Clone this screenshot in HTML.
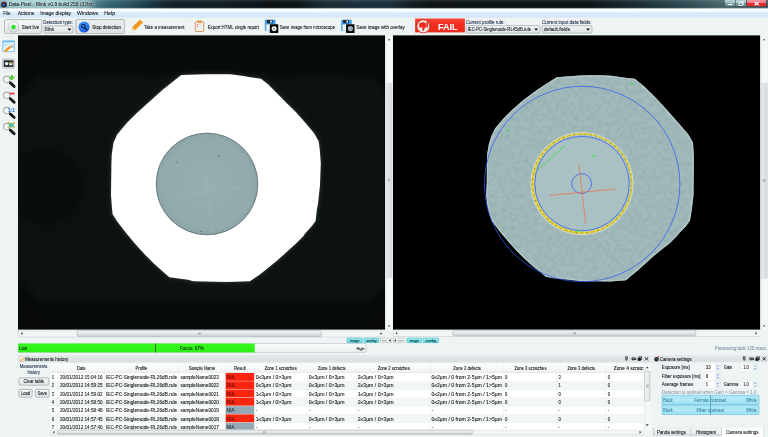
<!DOCTYPE html>
<html lang="en"><head><meta charset="utf-8"><title>Data-Pixel - Blink v0.9 build 258 (32bit)</title>
<style>
html,body{margin:0;padding:0;background:#eef3f3;overflow:hidden}
#w{position:relative;width:768px;height:437px;overflow:hidden}
#r{position:absolute;left:0;top:0;width:6144px;height:3496px;overflow:hidden;background:#eef3f3;font-family:"Liberation Sans",sans-serif;transform:scale(0.125);transform-origin:0 0}
#r div,#r span,#r svg{position:absolute}
#r svg{overflow:visible}
#r .t{white-space:nowrap;display:block}
</style></head><body><div id="w"><div id="r">
<div style="left:0;top:0;width:6144px;height:68.8px;background:linear-gradient(90deg,#86b2b8 0px,#a9d4d8 112px,#a6d0d5 480px,#86b0b7 704px,#4a7e8a 776px,#386874 880px,#2b5462 1040px,#1c3a46 1200px,#122028 1376px,#142028 1696px,#0c1216 2160px,#0e161a 2400px,#1c303a 2600px,#1e3440 3120px,#131d22 3296px,#0d1316 3456px,#0e161a 4720px,#1e3038 5120px,#2e4a52 5440px,#4a6a70 5776px,#42626a 6144px);"></div>
<div style="left:0;top:0;width:6144px;height:68.8px;background:linear-gradient(180deg,rgba(255,255,255,.10),rgba(255,255,255,0) 35%,rgba(0,0,0,.10) 75%,rgba(120,170,185,.22) 100%);"></div>
<svg style="left:6.4px;top:9.6px" width="51.2" height="51.2" viewBox="0 0 64 64"><circle cx="32" cy="34" r="28" fill="#1b1f2a"/><circle cx="30" cy="36" r="13" fill="#2a55e0"/><circle cx="27" cy="33" r="5" fill="#7fb0ff"/><circle cx="34" cy="9" r="9" fill="#e02020"/></svg>
<span class="t" style="left:68.8px;top:12.64px;font-size:37.6px;line-height:45.12px;color:#10171a;transform:scaleX(1.051);transform-origin:0 0;-webkit-text-stroke:0.72px #10171a;text-shadow:0 0 6.4px #e8ffff,0 0 14.4px #d0f4f4,0 0 22.4px #c8f0f0;">Data-Pixel - Blink v0.9 build 258 (32bit)</span>
<div style="left:5796px;top:0;width:89.6px;height:55.2px;background:linear-gradient(180deg,#b6d0d3 0%,#a9c5c9 48%,#6f8f96 52%,#7b9aa0 100%);border:4px solid #2c4248;border-top:0;border-radius:0 0 0 12.8px;box-sizing:border-box"></div>
<div style="left:5885.6px;top:0;width:87.2px;height:55.2px;background:linear-gradient(180deg,#b6d0d3 0%,#a9c5c9 48%,#6f8f96 52%,#7b9aa0 100%);border:4px solid #2c4248;border-top:0;border-left:0;box-sizing:border-box"></div>
<div style="left:5972.8px;top:0;width:160px;height:55.2px;background:linear-gradient(180deg,#f096a8 0%,#ec7f90 46%,#e31c1c 52%,#e83434 100%);border:4px solid #4a1a1a;border-top:0;border-left:0;border-radius:0 0 12.8px 0;box-sizing:border-box"></div>
<div style="left:5822.4px;top:32px;width:36.8px;height:9.6px;background:#f4f8f8;box-shadow:0 0 4px #345"></div>
<svg style="left:5907.2px;top:11.2px" width="44.8" height="36.8" viewBox="0 0 12 10"><rect x="3.5" y="1" width="7" height="6" fill="none" stroke="#f4f8f8" stroke-width="1.8"/><rect x="1" y="3.5" width="7" height="5.5" fill="#5e7e86" stroke="#f4f8f8" stroke-width="1.8"/></svg>
<svg style="left:6032px;top:12px" width="43.2" height="35.2" viewBox="0 0 12 9"><path d="M1.5 1L10.5 8M10.5 1L1.5 8" stroke="#fff" stroke-width="2.8"/></svg>
<div style="left:0px;top:68px;width:6144px;height:73.6px;background:linear-gradient(180deg,#eef4f8 0%,#ffffff 8%,#fafdff 28%,#ddecfa 42%,#d3e7f9 100%);"></div>
<span class="t" style="left:25.6px;top:80.96px;font-size:38.4px;line-height:46.08px;color:#1a1c24;transform:scaleX(0.931);transform-origin:0 0;-webkit-text-stroke:0.72px #1a1c24;">File</span>
<span class="t" style="left:140.8px;top:80.96px;font-size:38.4px;line-height:46.08px;color:#1a1c24;transform:scaleX(1.055);transform-origin:0 0;-webkit-text-stroke:0.72px #1a1c24;">Actions</span>
<span class="t" style="left:321.6px;top:80.96px;font-size:38.4px;line-height:46.08px;color:#1a1c24;transform:scaleX(1.04);transform-origin:0 0;-webkit-text-stroke:0.72px #1a1c24;">Image display</span>
<span class="t" style="left:616px;top:80.96px;font-size:38.4px;line-height:46.08px;color:#1a1c24;transform:scaleX(1.078);transform-origin:0 0;-webkit-text-stroke:0.72px #1a1c24;">Windows</span>
<span class="t" style="left:833.6px;top:80.96px;font-size:38.4px;line-height:46.08px;color:#1a1c24;transform:scaleX(1.094);transform-origin:0 0;-webkit-text-stroke:0.72px #1a1c24;">Help</span>
<div style="left:0px;top:141.6px;width:6144px;height:141.6px;background:#eef3f3;"></div>
<div style="left:9.6px;top:160px;width:5.6px;height:5.6px;background:#c4cccc"></div>
<div style="left:9.6px;top:177.6px;width:5.6px;height:5.6px;background:#c4cccc"></div>
<div style="left:9.6px;top:195.2px;width:5.6px;height:5.6px;background:#c4cccc"></div>
<div style="left:9.6px;top:212.8px;width:5.6px;height:5.6px;background:#c4cccc"></div>
<div style="left:9.6px;top:230.4px;width:5.6px;height:5.6px;background:#c4cccc"></div>
<div style="left:9.6px;top:248px;width:5.6px;height:5.6px;background:#c4cccc"></div>
<div style="left:33.6px;top:155.2px;width:302.4px;height:113.6px;border:5.6px solid #889294;border-radius:11.2px;background:linear-gradient(180deg,#f7f9f9,#e9eeee 50%,#dfe5e5);box-sizing:border-box;box-shadow:inset 0 0 0 4px #fbfdfd;"></div>
<svg style="left:60px;top:168px" width="96" height="96" viewBox="0 0 24 24"><defs><linearGradient id="gsl" x1="0" y1="0" x2="0" y2="1"><stop offset="0" stop-color="#fdfefe"/><stop offset="1" stop-color="#cfd6d6"/></linearGradient></defs><circle cx="12" cy="12" r="10.6" fill="url(#gsl)" stroke="#aab3b3" stroke-width="1"/><circle cx="12" cy="12" r="4.6" fill="#2fe52b"/></svg>
<span class="t" style="left:172.8px;top:193.44px;font-size:37.6px;line-height:45.12px;color:#15181c;transform:scaleX(0.963);transform-origin:0 0;-webkit-text-stroke:0.72px #15181c;">Start live</span>
<span class="t" style="left:345.6px;top:156.64px;font-size:37.6px;line-height:45.12px;color:#1e2a48;transform:scaleX(0.951);transform-origin:0 0;-webkit-text-stroke:0.72px #1e2a48;">Detection type:</span>
<div style="left:348.8px;top:204.8px;width:236.8px;height:62.4px;border:5.6px solid #929c9e;border-radius:9.6px;background:linear-gradient(180deg,#f6f8f8,#e6ebeb 55%,#dde3e3);box-sizing:border-box;"></div>
<span class="t" style="left:360px;top:214.72px;font-size:36.8px;line-height:44.16px;color:#15181c;transform:scaleX(0.903);transform-origin:0 0;-webkit-text-stroke:0.72px #15181c;">Blink</span>
<svg style="left:540px;top:227.6px" width="30.4" height="18.4" viewBox="0 0 10 6"><path d="M0 0H10L5 6Z" fill="#111"/></svg>
<div style="left:604.8px;top:155.2px;width:392px;height:113.6px;border:5.6px solid #889294;border-radius:11.2px;background:linear-gradient(180deg,#f7f9f9,#e9eeee 50%,#dfe5e5);box-sizing:border-box;box-shadow:inset 0 0 0 4px #fbfdfd;border-color:#7f8a8c;background:linear-gradient(180deg,#e9eeef,#e2e8e9 50%,#dbe2e3);"></div>
<svg style="left:625.6px;top:169.6px" width="92.8" height="92.8" viewBox="0 0 24 24"><defs><radialGradient id="gsd" cx=".4" cy=".3" r=".8"><stop offset="0" stop-color="#3d9bff"/><stop offset=".7" stop-color="#1f6cf0"/><stop offset="1" stop-color="#1450c8"/></radialGradient></defs><circle cx="12" cy="12" r="11.4" fill="url(#gsd)"/><circle cx="10.6" cy="10.4" r="3.6" fill="none" stroke="#0b1530" stroke-width="2.2"/><path d="M13.2 13.2L17.6 17.6" stroke="#0b1530" stroke-width="2.8" stroke-linecap="round"/></svg>
<span class="t" style="left:737.6px;top:193.44px;font-size:37.6px;line-height:45.12px;color:#15181c;transform:scaleX(0.958);transform-origin:0 0;-webkit-text-stroke:0.72px #15181c;">Stop detection</span>
<svg style="left:1041.6px;top:158.4px" width="96" height="105.6" viewBox="0 0 24 26.4"><g transform="rotate(46 12 13)"><rect x="8.2" y="-1.5" width="7.6" height="22" fill="#f79a1c" stroke="#e88a10" stroke-width=".7"/><path d="M8.2 2.5H11.6M8.2 6H10.8M8.2 9.5H11.6M8.2 13H10.8M8.2 16.5H11.6" stroke="#d47808" stroke-width=".9"/><path d="M8.2 20.5H15.8L12 25.5Z" fill="#f9cf8f"/></g><path d="M3.4 25.4H8" stroke="#f0b060" stroke-width=".8"/></svg>
<span class="t" style="left:1152px;top:193.44px;font-size:37.6px;line-height:45.12px;color:#15181c;transform:scaleX(0.925);transform-origin:0 0;-webkit-text-stroke:0.72px #15181c;">Take a measurement</span>
<div style="left:1512px;top:164px;width:4px;height:96px;background:#d3dada"></div>
<div style="left:1516px;top:164px;width:4px;height:96px;background:#fbfdfd"></div>
<svg style="left:1559.2px;top:162.4px" width="73.6" height="92" viewBox="0 0 20 25"><rect x="1" y="3.4" width="18" height="21" rx="1.5" fill="#f6f7f5" stroke="#d9803a" stroke-width="1.8"/><rect x="6" y="1" width="8" height="4.6" rx="1" fill="#f2a04c" stroke="#c96b20" stroke-width=".8"/><rect x="4.6" y="8" width="2.4" height="2.4" fill="#e8486a"/><rect x="4.6" y="12.4" width="2.4" height="2.4" fill="#e8486a"/><path d="M9 9.2H15.5M9 13.6H15.5M5 18H15.5" stroke="#c9cfd2" stroke-width="1"/></svg>
<span class="t" style="left:1660.8px;top:193.44px;font-size:37.6px;line-height:45.12px;color:#15181c;transform:scaleX(0.94);transform-origin:0 0;-webkit-text-stroke:0.72px #15181c;">Export HTML single report</span>
<svg style="left:2118.4px;top:156.8px" width="112" height="112" viewBox="0 0 36 36"><rect x="1.2" y="0.8" width="25.6" height="27.4" rx="1.6" fill="#3aa0ee" stroke="#1f7fd6" stroke-width="1"/><rect x="5.4" y="0.8" width="15" height="8.6" fill="#1c2a3a"/><rect x="13.8" y="2.2" width="4.4" height="5.4" fill="#d9ecfa"/><rect x="4" y="12.4" width="20" height="15.8" fill="#f4f8fb"/><rect x="13" y="12.2" width="21.8" height="22" rx="1" fill="#0a0a0a"/><circle cx="24.2" cy="23.6" r="6.4" fill="#fff"/><circle cx="24.2" cy="23.6" r="2.8" fill="#8a9698"/></svg>
<span class="t" style="left:2238.4px;top:193.44px;font-size:37.6px;line-height:45.12px;color:#15181c;transform:scaleX(0.91);transform-origin:0 0;-webkit-text-stroke:0.72px #15181c;">Save image from microscope</span>
<svg style="left:2728px;top:156.8px" width="112" height="112" viewBox="0 0 36 36"><rect x="1.2" y="0.8" width="25.6" height="27.4" rx="1.6" fill="#3aa0ee" stroke="#1f7fd6" stroke-width="1"/><rect x="5.4" y="0.8" width="15" height="8.6" fill="#1c2a3a"/><rect x="13.8" y="2.2" width="4.4" height="5.4" fill="#d9ecfa"/><rect x="4" y="12.4" width="20" height="15.8" fill="#f4f8fb"/><rect x="13" y="12.2" width="21.8" height="22" rx="1" fill="#0a0a0a"/><circle cx="24.2" cy="23.6" r="6.4" fill="#fff"/><circle cx="24.2" cy="23.6" r="4" fill="none" stroke="#2a62e0" stroke-width="1.7"/><path d="M19.6 25L28.6 22" stroke="#e04a20" stroke-width="1.3"/><path d="M23.6 19V28.4" stroke="#28c040" stroke-width="1.3"/></svg>
<span class="t" style="left:2849.6px;top:193.44px;font-size:37.6px;line-height:45.12px;color:#15181c;transform:scaleX(0.95);transform-origin:0 0;-webkit-text-stroke:0.72px #15181c;">Save image with overlay</span>
<div style="left:3280px;top:164px;width:4px;height:96px;background:#d3dada"></div>
<div style="left:3284px;top:164px;width:4px;height:96px;background:#fbfdfd"></div>
<div style="left:3299.2px;top:160px;width:5.6px;height:5.6px;background:#c4cccc"></div>
<div style="left:3299.2px;top:177.6px;width:5.6px;height:5.6px;background:#c4cccc"></div>
<div style="left:3299.2px;top:195.2px;width:5.6px;height:5.6px;background:#c4cccc"></div>
<div style="left:3299.2px;top:212.8px;width:5.6px;height:5.6px;background:#c4cccc"></div>
<div style="left:3299.2px;top:230.4px;width:5.6px;height:5.6px;background:#c4cccc"></div>
<div style="left:3299.2px;top:248px;width:5.6px;height:5.6px;background:#c4cccc"></div>
<div style="left:3320.8px;top:148px;width:398.4px;height:111.2px;background:linear-gradient(180deg,#f6463a 0%,#f22c1e 45%,#ee2a1c 100%);"></div>
<svg style="left:3328px;top:152px" width="116.8" height="116.8" viewBox="0 0 30 30"><circle cx="15" cy="15" r="13.4" fill="#e4efe6" stroke="#dc2016" stroke-width="1.7"/><g transform="translate(15 15) scale(1.04) translate(-15.8 -14.2)"><path d="M8.5 7.5C12 5.8 17 5.6 20.5 7.2L21.5 15.5C19 16.6 17.6 18.6 17.4 21.6C17.3 23.8 14.4 24 14 21.6C13.7 19.6 14.1 18.2 14.6 16.8H9.6C7.4 16.8 7 14.8 8.2 13.9C7 13 7.2 11.4 8.4 10.9C7.4 9.8 7.6 8.2 8.5 7.5Z" fill="#ee2c1e"/><rect x="21.8" y="6.2" width="3.4" height="10.2" fill="#ee2c1e"/></g></svg>
<span class="t" style="left:3504px;top:165.76px;font-size:74.4px;line-height:89.28px;color:#ffffff;transform:scaleX(0.973);transform-origin:0 0;-webkit-text-stroke:0.4px #ffffff;font-weight:bold;">FAIL</span>
<span class="t" style="left:3726.4px;top:155.04px;font-size:37.6px;line-height:45.12px;color:#1e2a48;transform:scaleX(0.965);transform-origin:0 0;-webkit-text-stroke:0.72px #1e2a48;">Current profile rule:</span>
<div style="left:3728px;top:203.2px;width:593.6px;height:64px;border:5.6px solid #929c9e;border-radius:9.6px;background:linear-gradient(180deg,#f6f8f8,#e6ebeb 55%,#dde3e3);box-sizing:border-box;"></div>
<span class="t" style="left:3740.8px;top:214.72px;font-size:36.8px;line-height:44.16px;color:#15181c;transform:scaleX(0.925);transform-origin:0 0;-webkit-text-stroke:0.72px #15181c;">IEC-PC-Singlemode-RL45dB.rule</span>
<svg style="left:4274.4px;top:227.6px" width="30.4" height="18.4" viewBox="0 0 10 6"><path d="M0 0H10L5 6Z" fill="#111"/></svg>
<span class="t" style="left:4336px;top:155.04px;font-size:37.6px;line-height:45.12px;color:#1e2a48;transform:scaleX(0.969);transform-origin:0 0;-webkit-text-stroke:0.72px #1e2a48;">Current input data fields:</span>
<div style="left:4336px;top:203.2px;width:401.6px;height:64px;border:5.6px solid #929c9e;border-radius:9.6px;background:linear-gradient(180deg,#f6f8f8,#e6ebeb 55%,#dde3e3);box-sizing:border-box;"></div>
<span class="t" style="left:4352px;top:214.72px;font-size:36.8px;line-height:44.16px;color:#15181c;transform:scaleX(1.007);transform-origin:0 0;-webkit-text-stroke:0.72px #15181c;">default.fields</span>
<svg style="left:4688.8px;top:227.6px" width="30.4" height="18.4" viewBox="0 0 10 6"><path d="M0 0H10L5 6Z" fill="#111"/></svg>
<div style="left:0px;top:280px;width:140.8px;height:3216px;background:#eef3f3;"></div>
<div style="left:17.6px;top:289.6px;width:5.6px;height:5.6px;background:#c4cccc"></div>
<div style="left:35.2px;top:289.6px;width:5.6px;height:5.6px;background:#c4cccc"></div>
<div style="left:52.8px;top:289.6px;width:5.6px;height:5.6px;background:#c4cccc"></div>
<div style="left:70.4px;top:289.6px;width:5.6px;height:5.6px;background:#c4cccc"></div>
<div style="left:88px;top:289.6px;width:5.6px;height:5.6px;background:#c4cccc"></div>
<div style="left:105.6px;top:289.6px;width:5.6px;height:5.6px;background:#c4cccc"></div>
<svg style="left:18.4px;top:323.2px" width="100.8" height="100.8" viewBox="0 0 25 25"><defs><linearGradient id="gw1" x1="0" y1="0" x2="1" y2="1"><stop offset="0" stop-color="#c9eafc"/><stop offset=".6" stop-color="#f4fbff"/><stop offset="1" stop-color="#ffffff"/></linearGradient></defs><rect x="1" y="1" width="23" height="21.4" rx="1" fill="url(#gw1)" stroke="#56b8f0" stroke-width="1.5"/><rect x="1" y="1" width="23" height="3" fill="#6cc2f2"/><rect x="15" y="8.4" width="7.4" height="6.4" fill="#aeb6ba"/><rect x="16.2" y="9.8" width="5" height="1.4" fill="#e8ecee"/><path d="M4 8H12M4 11H10" stroke="#a6d6f2" stroke-width="1.1"/><path d="M5.6 22L15.4 12.8" stroke="#f7941c" stroke-width="4.6"/><path d="M2.6 24.8L3.9 20.4L7.2 23.6Z" fill="#f9c98a"/></svg>
<svg style="left:18.4px;top:468px" width="100.8" height="81.6" viewBox="0 0 25 20"><rect x=".8" y=".8" width="23.4" height="18.4" rx="1.6" fill="#dfe4e4" stroke="#a3abad" stroke-width="1.2"/><rect x="3" y="3.4" width="19" height="13.2" fill="#2a2e30"/><circle cx="8.6" cy="10" r="3.4" fill="#f2f5f5"/><circle cx="17" cy="10" r="3.8" fill="#e6eaea"/><path d="M17 6.2A3.8 3.8 0 0 1 20.8 10H17Z" fill="#e03a2a"/><path d="M17 10H13.2A3.8 3.8 0 0 1 17 6.2Z" fill="#36b04a"/></svg>
<div style="left:24px;top:569.6px;width:9.6px;height:4px;background:#d2d9d9"></div>
<div style="left:40.8px;top:569.6px;width:9.6px;height:4px;background:#d2d9d9"></div>
<div style="left:57.6px;top:569.6px;width:9.6px;height:4px;background:#d2d9d9"></div>
<div style="left:74.4px;top:569.6px;width:9.6px;height:4px;background:#d2d9d9"></div>
<div style="left:91.2px;top:569.6px;width:9.6px;height:4px;background:#d2d9d9"></div>
<div style="left:108px;top:569.6px;width:9.6px;height:4px;background:#d2d9d9"></div>
<svg style="left:19.2px;top:595.2px" width="104" height="104" viewBox="0 0 26 26"><circle cx="8.8" cy="10" r="6.4" fill="#f8fbfb" stroke="#a6aeb0" stroke-width="2.3"/><path d="M13.4 14.4L17 18" stroke="#8a9294" stroke-width="3"/><path d="M16 17L23.6 24.2" stroke="#16181a" stroke-width="5.6" stroke-linecap="round"/><path d="M19 1.4V11M14.2 6.2H23.8" stroke="#4bd22c" stroke-width="3.6"/></svg>
<svg style="left:19.2px;top:721.6px" width="104" height="104" viewBox="0 0 26 26"><circle cx="8.8" cy="10" r="6.4" fill="#f8fbfb" stroke="#a6aeb0" stroke-width="2.3"/><path d="M13.4 14.4L17 18" stroke="#8a9294" stroke-width="3"/><path d="M16 17L23.6 24.2" stroke="#16181a" stroke-width="5.6" stroke-linecap="round"/><path d="M14 6.6H24.6" stroke="#e5383a" stroke-width="3.4"/></svg>
<svg style="left:19.2px;top:844px" width="104" height="104" viewBox="0 0 26 26"><circle cx="8.8" cy="10" r="6.4" fill="#f8fbfb" stroke="#a6aeb0" stroke-width="2.3"/><path d="M13.4 14.4L17 18" stroke="#8a9294" stroke-width="3"/><path d="M16 17L23.6 24.2" stroke="#16181a" stroke-width="5.6" stroke-linecap="round"/></svg>
<span class="t" style="left:64px;top:848.64px;font-size:49.6px;line-height:59.52px;color:#2d7fe6;transform:scaleX(0.78);transform-origin:0 0;-webkit-text-stroke:1.6px #2d7fe6;font-weight:bold;">1:1</span>
<svg style="left:19.2px;top:972.8px" width="104" height="104" viewBox="0 0 26 26"><circle cx="8.8" cy="10" r="6.4" fill="#f8fbfb" stroke="#a6aeb0" stroke-width="2.3"/><path d="M13.4 14.4L17 18" stroke="#8a9294" stroke-width="3"/><path d="M16 17L23.6 24.2" stroke="#16181a" stroke-width="5.6" stroke-linecap="round"/><rect x="13" y="3.2" width="9.6" height="8" fill="#39c04a"/><rect x="14.8" y="5" width="6" height="4.4" fill="#6aa8f0"/><path d="M11.4 1.8H14M11.4 1.8V4.4M24.2 1.8H21.6M24.2 1.8V4.4M11.4 12.6H14M11.4 12.6V10M24.2 12.6H21.6M24.2 12.6V10" stroke="#f08a1c" stroke-width="1.6" fill="none"/></svg>
<svg style="left:144px;top:283.2px" width="2936" height="2355.2" viewBox="0 0 367 294.4"><defs><radialGradient id="lbg" cx="0.54" cy="0.5" r="0.8"><stop offset="0" stop-color="#090c0c"/><stop offset="1" stop-color="#070909"/></radialGradient><filter id="bl1" color-interpolation-filters="sRGB" x="-10%" y="-10%" width="120%" height="120%"><feGaussianBlur stdDeviation="0.55"/></filter><filter id="bl3" color-interpolation-filters="sRGB" filterUnits="userSpaceOnUse" x="-60" y="-60" width="500" height="420"><feGaussianBlur stdDeviation="2.2"/></filter><filter id="bl4" color-interpolation-filters="sRGB" filterUnits="userSpaceOnUse" x="-80" y="-80" width="540" height="460"><feGaussianBlur stdDeviation="3"/></filter><filter id="bl5" color-interpolation-filters="sRGB" filterUnits="userSpaceOnUse" x="-80" y="-80" width="540" height="460"><feGaussianBlur stdDeviation="9"/></filter><radialGradient id="lfib" cx="0.5" cy="0.5" r="0.5"><stop offset="0" stop-color="#96b0b2"/><stop offset="0.9" stop-color="#91abad"/><stop offset="1" stop-color="#8aa4a6"/></radialGradient><clipPath id="lclip"><rect width="367" height="294.4"/></clipPath></defs><rect width="367" height="294.4" fill="url(#lbg)"/><g clip-path="url(#lclip)"><polygon points="-24,92.6 20,40.1 354,40.1 380,70.6 380,234.6 354,266.6 20,266.6 -24,214.6" fill="#0c1111" filter="url(#bl4)"/><polygon points="163.2,39.6 187,39 212,39 225.7,40.6 232,41.9 243,43.4 250.3,49.2 259.5,58.4 268.6,67.6 277.8,76.7 286.9,86.8 296.1,97.8 300.7,106 301.8,114.6 302.8,127.6 302,149.6 300,168.6 298.8,174.6 297.6,185.6 294.3,190.2 286.9,198.4 285.1,201.2 277.8,208.5 268.6,216.7 259.5,225 250.3,232.3 241.2,239.6 232,245.8 208.4,246.6 175.2,245.9 170,244.5 151.4,241.9 145,236.4 135.8,228.2 126.6,219 117.5,209 108.3,198 99.2,186.1 94.6,178.8 93.7,169.6 93,159.6 93.4,129.6 93.7,119.6 95.5,107.4 99.2,99.1 108.3,88.1 117.5,79 126.6,70.7 135.8,62.5 145,54.2 154.1,46.9" fill="#151b1b" opacity=".55" filter="url(#bl5)"/><circle cx="27" cy="151.6" r="38" fill="#090c0c" filter="url(#bl4)"/></g><polygon points="163.2,39.6 187,39 212,39 225.7,40.6 232,41.9 243,43.4 250.3,49.2 259.5,58.4 268.6,67.6 277.8,76.7 286.9,86.8 296.1,97.8 300.7,106 301.8,114.6 302.8,127.6 302,149.6 300,168.6 298.8,174.6 297.6,185.6 294.3,190.2 286.9,198.4 285.1,201.2 277.8,208.5 268.6,216.7 259.5,225 250.3,232.3 241.2,239.6 232,245.8 208.4,246.6 175.2,245.9 170,244.5 151.4,241.9 145,236.4 135.8,228.2 126.6,219 117.5,209 108.3,198 99.2,186.1 94.6,178.8 93.7,169.6 93,159.6 93.4,129.6 93.7,119.6 95.5,107.4 99.2,99.1 108.3,88.1 117.5,79 126.6,70.7 135.8,62.5 145,54.2 154.1,46.9" fill="#8f9a9a" opacity=".3" filter="url(#bl3)"/><polygon points="163.2,39.6 187,39 212,39 225.7,40.6 232,41.9 243,43.4 250.3,49.2 259.5,58.4 268.6,67.6 277.8,76.7 286.9,86.8 296.1,97.8 300.7,106 301.8,114.6 302.8,127.6 302,149.6 300,168.6 298.8,174.6 297.6,185.6 294.3,190.2 286.9,198.4 285.1,201.2 277.8,208.5 268.6,216.7 259.5,225 250.3,232.3 241.2,239.6 232,245.8 208.4,246.6 175.2,245.9 170,244.5 151.4,241.9 145,236.4 135.8,228.2 126.6,219 117.5,209 108.3,198 99.2,186.1 94.6,178.8 93.7,169.6 93,159.6 93.4,129.6 93.7,119.6 95.5,107.4 99.2,99.1 108.3,88.1 117.5,79 126.6,70.7 135.8,62.5 145,54.2 154.1,46.9" fill="#ffffff" filter="url(#bl1)"/><circle cx="189" cy="148.6" r="50.9" fill="url(#lfib)" stroke="#3c4a4d" stroke-width="0.55"/><path d="M142 136.6L168 110.6M154 160.6L234 150.6M188 140.6L194 196.6" stroke="#a9c0c2" stroke-width=".5" opacity=".6" fill="none"/><circle cx="200.6" cy="120.6" r=".6" fill="#3a4548"/><circle cx="159" cy="126.6" r=".5" fill="#3a4548"/><circle cx="183.4" cy="196" r=".6" fill="#3a4548"/></svg>
<div style="left:3080px;top:283.2px;width:64px;height:2355.2px;background:linear-gradient(90deg,#dde4e6,#f3f7f7 22%,#f6f9f9 80%,#eef2f3);"></div>
<svg style="left:3101.6px;top:308.8px" width="20.8" height="13.6" viewBox="0 0 10 6"><path d="M0 6H10L5 0Z" fill="#3c4446"/></svg>
<svg style="left:3101.6px;top:2603.2px" width="20.8" height="13.6" viewBox="0 0 10 6"><path d="M0 0H10L5 6Z" fill="#3c4446"/></svg>
<div style="left:3084.8px;top:664px;width:52.8px;height:1558.4px;background:linear-gradient(90deg,#e6ebec,#dde3e4 50%,#d3dadb);border:3.2px solid #c0c8ca;border-radius:9.6px;box-sizing:border-box;"></div>
<div style="left:3100.8px;top:1430px;width:22.4px;height:4px;background:#8c9597"></div>
<div style="left:3100.8px;top:1438px;width:22.4px;height:4px;background:#8c9597"></div>
<div style="left:3100.8px;top:1446px;width:22.4px;height:4px;background:#8c9597"></div>
<div style="left:144px;top:2638.4px;width:2936px;height:59.2px;background:linear-gradient(180deg,#e4e9e9,#f2f5f6 35%,#f4f7f8);border-bottom:4px solid #c4cccd;border-left:4px solid #c9d1d2;box-sizing:border-box;"></div>
<div style="left:616px;top:2640.8px;width:1956px;height:52.8px;background:linear-gradient(180deg,#f4f7f7,#e0e6e6 50%,#c8d0d1);border:4px solid #98a2a4;border-radius:9.6px;box-sizing:border-box;"></div>
<div style="left:1584px;top:2660px;width:4px;height:16px;background:#7d8789"></div>
<div style="left:1592px;top:2660px;width:4px;height:16px;background:#7d8789"></div>
<div style="left:1600px;top:2660px;width:4px;height:16px;background:#7d8789"></div>
<svg style="left:164.8px;top:2656px" width="16" height="24" viewBox="0 0 6 10"><path d="M6 0V10L0 5Z" fill="#3c4446"/></svg>
<svg style="left:3043.2px;top:2656px" width="16" height="24" viewBox="0 0 6 10"><path d="M0 0V10L6 5Z" fill="#3c4446"/></svg>
<div style="left:3080px;top:2638.4px;width:62.4px;height:59.2px;background:#eef3f3"></div>
<svg style="left:3144px;top:283.2px" width="2937.6" height="2355.2" viewBox="0 0 367.2 294.4"><defs><filter id="bl2" color-interpolation-filters="sRGB" x="-10%" y="-10%" width="120%" height="120%"><feGaussianBlur stdDeviation="0.7"/></filter><clipPath id="rc"><rect width="367.2" height="294.4"/></clipPath></defs><rect width="367.2" height="294.4" fill="#000"/><polygon points="163.7,41.8 187,40.2 194,39.9 207,39.9 218.4,40.4 229.9,42.2 241.82,43.34 251.26,51.22 262.96,62.61 274.67,75.39 286.09,88.31 295.16,98.88 300,107.05 300.8,121.1 300.8,129.6 300.5,159.6 298.9,173.3 297.9,179.6 297,185.2 293,190.8 286.7,197.2 283.5,201.2 277,207.6 269,214 261,220.4 253,227.6 245,234.9 237,241.3 233,244.9 217,246.2 187,245.6 167,243.4 161,242.9 152.7,241.3 147,236.5 139,230.1 131,222.8 123,214.8 115,206 107,196.4 99,186 96.6,179.6 94.2,169.6 93.2,159.6 93.8,146.6 93.9,129.6 94.2,118.7 95.8,109.1 98.2,101.1 102.2,93 110.2,83.4 119.8,73.8 131,64.2 143.9,54.6 153,48.6" fill="#a2babb" filter="url(#bl2)"/><filter id="nz" x="0" y="0" width="100%%" height="100%%" color-interpolation-filters="sRGB"><feTurbulence type="fractalNoise" baseFrequency="0.22" numOctaves="2" seed="7"/><feColorMatrix type="matrix" values="0 0 0 0 0.35  0 0 0 0 0.45  0 0 0 0 0.45  1.6 0 0 0 -0.62"/></filter><clipPath id="roc"><polygon points="163.7,41.8 187,40.2 194,39.9 207,39.9 218.4,40.4 229.9,42.2 241.82,43.34 251.26,51.22 262.96,62.61 274.67,75.39 286.09,88.31 295.16,98.88 300,107.05 300.8,121.1 300.8,129.6 300.5,159.6 298.9,173.3 297.9,179.6 297,185.2 293,190.8 286.7,197.2 283.5,201.2 277,207.6 269,214 261,220.4 253,227.6 245,234.9 237,241.3 233,244.9 217,246.2 187,245.6 167,243.4 161,242.9 152.7,241.3 147,236.5 139,230.1 131,222.8 123,214.8 115,206 107,196.4 99,186 96.6,179.6 94.2,169.6 93.2,159.6 93.8,146.6 93.9,129.6 94.2,118.7 95.8,109.1 98.2,101.1 102.2,93 110.2,83.4 119.8,73.8 131,64.2 143.9,54.6 153,48.6"/></clipPath><polygon points="163.7,41.8 187,40.2 194,39.9 207,39.9 218.4,40.4 229.9,42.2 241.82,43.34 251.26,51.22 262.96,62.61 274.67,75.39 286.09,88.31 295.16,98.88 300,107.05 300.8,121.1 300.8,129.6 300.5,159.6 298.9,173.3 297.9,179.6 297,185.2 293,190.8 286.7,197.2 283.5,201.2 277,207.6 269,214 261,220.4 253,227.6 245,234.9 237,241.3 233,244.9 217,246.2 187,245.6 167,243.4 161,242.9 152.7,241.3 147,236.5 139,230.1 131,222.8 123,214.8 115,206 107,196.4 99,186 96.6,179.6 94.2,169.6 93.2,159.6 93.8,146.6 93.9,129.6 94.2,118.7 95.8,109.1 98.2,101.1 102.2,93 110.2,83.4 119.8,73.8 131,64.2 143.9,54.6 153,48.6" fill="none" stroke="#bdd0d0" stroke-width="2.6" opacity=".8" clip-path="url(#roc)" filter="url(#bl2)"/><g clip-path="url(#roc)"><rect x="90" y="36" width="214" height="214" filter="url(#nz)" opacity=".2"/></g><circle cx="189" cy="148.2" r="50.4" fill="#a9c1c3"/><circle cx="189" cy="148.2" r="51.2" fill="none" stroke="#e4ebe8" stroke-width=".7"/><path fill-rule="evenodd" fill="#e8d63a" d="M189 148.2m-50.6 0a50.6 50.6 0 1 0 101.2 0a50.6 50.6 0 1 0 -101.2 0ZM189.45 147.85m-48.5 0a48.5 48.5 0 1 0 97 0a48.5 48.5 0 1 0 -97 0Z"/><circle cx="189" cy="148.2" r="49.5" fill="none" stroke="#4a3f10" stroke-width="1.1" stroke-dasharray="0.5 1.3 0.9 2.6 0.4 0.9 1.2 3.1" opacity=".55"/><circle cx="189" cy="148.2" r="47.2" fill="none" stroke="#2f5df2" stroke-width=".75"/><circle cx="189.2" cy="148.6" r="97.7" fill="none" stroke="#2f5df2" stroke-width=".75"/><circle cx="188.7" cy="148.2" r="9.9" fill="none" stroke="#2f5df2" stroke-width=".75"/><path d="M156.8 160L222.4 153.6M186 129.2L192.6 187.8" stroke="#f0704a" stroke-width=".75" fill="none"/><path d="M143.7 135.3L172.4 110.2" stroke="#35e035" stroke-width=".7" fill="none"/><path d="M182.6 196.8L186 194.4" stroke="#35e035" stroke-width="1.1"/><circle cx="115.4" cy="94.9" r="1.1" fill="#30e830"/><circle cx="238.8" cy="48.4" r="1.1" fill="#30e830"/><circle cx="200.7" cy="121" r="1.1" fill="#30e830"/></svg>
<div style="left:6081.6px;top:283.2px;width:62.4px;height:2355.2px;background:linear-gradient(90deg,#dde4e6,#f3f7f7 22%,#f6f9f9 80%,#eef2f3);"></div>
<svg style="left:6102.4px;top:308.8px" width="20.8" height="13.6" viewBox="0 0 10 6"><path d="M0 6H10L5 0Z" fill="#3c4446"/></svg>
<svg style="left:6102.4px;top:2603.2px" width="20.8" height="13.6" viewBox="0 0 10 6"><path d="M0 0H10L5 6Z" fill="#3c4446"/></svg>
<div style="left:6084.8px;top:664px;width:56px;height:1564.8px;background:linear-gradient(90deg,#e6ebec,#dde3e4 50%,#d3dadb);border:3.2px solid #c0c8ca;border-radius:9.6px;box-sizing:border-box;"></div>
<div style="left:6100.8px;top:1434px;width:22.4px;height:4px;background:#8c9597"></div>
<div style="left:6100.8px;top:1442px;width:22.4px;height:4px;background:#8c9597"></div>
<div style="left:6100.8px;top:1450px;width:22.4px;height:4px;background:#8c9597"></div>
<div style="left:3142.4px;top:2638.4px;width:2937.6px;height:54.4px;background:linear-gradient(180deg,#e4e9e9,#f2f5f6 35%,#f4f7f8);border-bottom:4px solid #c4cccd;border-left:4px solid #c9d1d2;box-sizing:border-box;"></div>
<div style="left:3620px;top:2640.8px;width:1948px;height:48px;background:linear-gradient(180deg,#f4f7f7,#e0e6e6 50%,#c8d0d1);border:4px solid #98a2a4;border-radius:9.6px;box-sizing:border-box;"></div>
<div style="left:4584px;top:2657.6px;width:4px;height:16px;background:#7d8789"></div>
<div style="left:4592px;top:2657.6px;width:4px;height:16px;background:#7d8789"></div>
<div style="left:4600px;top:2657.6px;width:4px;height:16px;background:#7d8789"></div>
<svg style="left:3163.2px;top:2653.6px" width="16" height="24" viewBox="0 0 6 10"><path d="M6 0V10L0 5Z" fill="#3c4446"/></svg>
<svg style="left:6043.2px;top:2653.6px" width="16" height="24" viewBox="0 0 6 10"><path d="M0 0V10L6 5Z" fill="#3c4446"/></svg>
<div style="left:6080px;top:2638.4px;width:64px;height:57.6px;background:#eef3f3"></div>
<div style="left:2773.6px;top:2703.2px;width:127.2px;height:40px;background:linear-gradient(180deg,#a4ecee,#6edbe0);border:5.6px solid #17b6c4;border-radius:6.4px;box-sizing:border-box;"></div>
<span class="t" style="left:2800.72px;top:2706.32px;font-size:28.8px;line-height:34.56px;color:#0c3a46;transform:scaleX(0.93);transform-origin:0 0;-webkit-text-stroke:0.96px #0c3a46;">image</span>
<div style="left:2910.4px;top:2703.2px;width:120.8px;height:40px;background:linear-gradient(180deg,#a4ecee,#6edbe0);border:5.6px solid #17b6c4;border-radius:6.4px;box-sizing:border-box;"></div>
<span class="t" style="left:2927.6px;top:2706.32px;font-size:28.8px;line-height:34.56px;color:#0c3a46;transform:scaleX(0.93);transform-origin:0 0;-webkit-text-stroke:0.96px #0c3a46;">overlay</span>
<div style="left:3040px;top:2703.2px;width:96px;height:40px;background:#f4f7f7;border:4px solid #aab3b4;border-radius:6.4px;box-sizing:border-box;"></div>
<span class="t" style="left:3051.2px;top:2707.84px;font-size:25.6px;line-height:30.72px;color:#8a9294;transform:scaleX(1.07);transform-origin:0 0;-webkit-text-stroke:0.72px #8a9294;">&lt;&lt;&lt;</span>
<svg style="left:3108.8px;top:2713.6px" width="16" height="19.2" viewBox="0 0 6 8"><path d="M6 0V8L0 4Z" fill="#111"/></svg>
<div style="left:3146.4px;top:2703.2px;width:96px;height:40px;background:#f4f7f7;border:4px solid #aab3b4;border-radius:6.4px;box-sizing:border-box;"></div>
<svg style="left:3156.8px;top:2713.6px" width="16" height="19.2" viewBox="0 0 6 8"><path d="M0 0V8L6 4Z" fill="#111"/></svg>
<span class="t" style="left:3182.4px;top:2707.84px;font-size:25.6px;line-height:30.72px;color:#8a9294;transform:scaleX(1.07);transform-origin:0 0;-webkit-text-stroke:0.72px #8a9294;">&gt;&gt;&gt;</span>
<div style="left:3253.6px;top:2703.2px;width:120px;height:40px;background:linear-gradient(180deg,#a4ecee,#6edbe0);border:5.6px solid #17b6c4;border-radius:6.4px;box-sizing:border-box;"></div>
<span class="t" style="left:3277.12px;top:2706.32px;font-size:28.8px;line-height:34.56px;color:#0c3a46;transform:scaleX(0.93);transform-origin:0 0;-webkit-text-stroke:0.96px #0c3a46;">image</span>
<div style="left:3383.2px;top:2703.2px;width:126.4px;height:40px;background:linear-gradient(180deg,#a4ecee,#6edbe0);border:5.6px solid #17b6c4;border-radius:6.4px;box-sizing:border-box;"></div>
<span class="t" style="left:3403.2px;top:2706.32px;font-size:28.8px;line-height:34.56px;color:#0c3a46;transform:scaleX(0.93);transform-origin:0 0;-webkit-text-stroke:0.96px #0c3a46;">overlay</span>
<div style="left:144px;top:2745.6px;width:2787.2px;height:76px;background:linear-gradient(180deg,#fafcfc,#f1f4f4 60%,#e6ebeb);border:4px solid #b4bcbd;border-radius:8px;box-sizing:border-box;"></div>
<div style="left:146.4px;top:2748px;width:1891.2px;height:71.2px;background:linear-gradient(180deg,#3af522,#30f618 50%,#2eee16);"></div>
<div style="left:1240px;top:2748.8px;width:4.8px;height:70.4px;background:#1c3a14"></div>
<span class="t" style="left:153.6px;top:2764px;font-size:36px;line-height:43.2px;color:#0c2408;transform:scaleX(0.945);transform-origin:0 0;-webkit-text-stroke:0.72px #0c2408;">Low</span>
<span class="t" style="left:1438.4px;top:2764px;font-size:36px;line-height:43.2px;color:#10300a;transform:scaleX(1.018);transform-origin:0 0;-webkit-text-stroke:0.72px #10300a;">Focus: 67%</span>
<span class="t" style="left:2851.2px;top:2764.48px;font-size:35.2px;line-height:42.24px;color:#1a2024;transform:scaleX(0.906);transform-origin:0 0;-webkit-text-stroke:0.72px #1a2024;">High</span>
<span class="t" style="left:5718.4px;top:2762.72px;font-size:36.8px;line-height:44.16px;color:#8090a2;transform:scaleX(0.949);transform-origin:0 0;-webkit-text-stroke:0.72px #8090a2;">Processing took 125 msec.</span>
<div style="left:144px;top:2840.8px;width:5060.8px;height:58.4px;background:linear-gradient(180deg,#e3e9ea,#d9e0e2);"></div>
<svg style="left:158.4px;top:2848px" width="36.8" height="46.4" viewBox="0 0 9 12"><path d="M.5 .5H6L8.5 3V11.5H.5Z" fill="#fdfdfb" stroke="#c7a25a" stroke-width=".9"/><path d="M2 9.5L6.6 3.6L8.2 5L3.6 10.6L1.6 11.2Z" fill="#f79a1c"/></svg>
<span class="t" style="left:201.6px;top:2849.92px;font-size:36.8px;line-height:44.16px;color:#15181c;transform:scaleX(0.946);transform-origin:0 0;-webkit-text-stroke:0.72px #15181c;">Measurements history</span>
<svg style="left:5000px;top:2851.2px" width="200" height="38.4" viewBox="0 0 50 9.6"><path d="M.4 1H5.4M1.4 1V5.2M4.4 1V5.2M0 5.4H5.8M2.9 5.4V9" stroke="#15181c" stroke-width="1.3" fill="none"/><path d="M11.6 4.8H15M15 1.8V7.8M15 3H21.6V6.6H15" stroke="#15181c" stroke-width="1.3" fill="none"/><rect x="16" y="4.6" width="5.6" height="2" fill="#15181c"/><rect x="28" y="1" width="5.4" height="5" fill="none" stroke="#15181c" stroke-width="1.4"/><rect x="26" y="3.4" width="5.4" height="5" fill="#15181c" stroke="#15181c" stroke-width="1.2"/><path d="M40 1.6L46 8M46 1.6L40 8" stroke="#15181c" stroke-width="1.8"/></svg>
<div style="left:144px;top:2899.2px;width:256px;height:596.8px;background:#eef3f3"></div>
<span class="t" style="left:158.08px;top:2908.8px;font-size:36px;line-height:43.2px;color:#26344e;transform:scaleX(0.93);transform-origin:0 0;-webkit-text-stroke:0.72px #26344e;">Measurements</span>
<span class="t" style="left:219.52px;top:2953.6px;font-size:36px;line-height:43.2px;color:#26344e;transform:scaleX(0.93);transform-origin:0 0;-webkit-text-stroke:0.72px #26344e;">history</span>
<div style="left:148.8px;top:3020.8px;width:244.8px;height:62.4px;border:5.6px solid #889294;border-radius:11.2px;background:linear-gradient(180deg,#f7f9f9,#e9eeee 50%,#dfe5e5);box-sizing:border-box;box-shadow:inset 0 0 0 4px #fbfdfd;"></div>
<span class="t" style="left:188.48px;top:3030.72px;font-size:36.8px;line-height:44.16px;color:#15181c;transform:scaleX(0.93);transform-origin:0 0;-webkit-text-stroke:0.72px #15181c;">Clear table</span>
<div style="left:148.8px;top:3112px;width:110.4px;height:67.2px;border:5.6px solid #889294;border-radius:11.2px;background:linear-gradient(180deg,#f7f9f9,#e9eeee 50%,#dfe5e5);box-sizing:border-box;box-shadow:inset 0 0 0 4px #fbfdfd;"></div>
<span class="t" style="left:166.72px;top:3124.8px;font-size:36px;line-height:43.2px;color:#15181c;transform:scaleX(0.93);transform-origin:0 0;-webkit-text-stroke:0.72px #15181c;">Load</span>
<div style="left:281.6px;top:3112px;width:113.6px;height:67.2px;border:5.6px solid #889294;border-radius:11.2px;background:linear-gradient(180deg,#f7f9f9,#e9eeee 50%,#dfe5e5);box-sizing:border-box;box-shadow:inset 0 0 0 4px #fbfdfd;"></div>
<span class="t" style="left:300.24px;top:3124.8px;font-size:36px;line-height:43.2px;color:#15181c;transform:scaleX(0.93);transform-origin:0 0;-webkit-text-stroke:0.72px #15181c;">Save</span>
<div style="left:400px;top:2908.8px;width:4804.8px;height:571.2px;background:#ffffff"></div>
<div style="left:400px;top:2908.8px;width:4752px;height:75.2px;background:linear-gradient(180deg,#ffffff,#f5f7f8 60%,#eef1f2);border-bottom:4px solid #d7dddf;box-sizing:border-box;"></div>
<div style="left:0;top:0;width:5152px;height:3436.8px;overflow:hidden">
<div style="left:400px;top:3046.96px;width:4752px;height:3.2px;background:#e6ebec"></div>
<span class="t" style="left:414.4px;top:2999.04px;font-size:36px;line-height:43.2px;color:#15181c;transform:scaleX(0.93);transform-origin:0 0;-webkit-text-stroke:0.72px #15181c;">1</span>
<span class="t" style="left:480px;top:2999.04px;font-size:36px;line-height:43.2px;color:#15181c;transform:scaleX(1.032);transform-origin:0 0;-webkit-text-stroke:0.72px #15181c;">20/01/2012 15:04:16</span>
<span class="t" style="left:848px;top:2999.04px;font-size:36px;line-height:43.2px;color:#15181c;transform:scaleX(1.062);transform-origin:0 0;-webkit-text-stroke:0.72px #15181c;">IEC-PC-Singlemode-RL26dB.rule</span>
<span class="t" style="left:1443.2px;top:2999.04px;font-size:36px;line-height:43.2px;color:#15181c;transform:scaleX(1.057);transform-origin:0 0;-webkit-text-stroke:0.72px #15181c;">sampleName0023</span>
<div style="left:1804px;top:2984px;width:229.6px;height:62.96px;background:#fd2410"></div>
<span class="t" style="left:1811.2px;top:2999.04px;font-size:36px;line-height:43.2px;color:#5a0c04;transform:scaleX(0.972);transform-origin:0 0;-webkit-text-stroke:0.72px #5a0c04;">FAIL</span>
<span class="t" style="left:2044.8px;top:2999.04px;font-size:36px;line-height:43.2px;color:#15181c;transform:scaleX(1.135);transform-origin:0 0;-webkit-text-stroke:0.72px #15181c;">0≤3µm / 0&gt;3µm</span>
<span class="t" style="left:2470.4px;top:2999.04px;font-size:36px;line-height:43.2px;color:#15181c;transform:scaleX(1.135);transform-origin:0 0;-webkit-text-stroke:0.72px #15181c;">0≤3µm / 0&gt;3µm</span>
<span class="t" style="left:2860.8px;top:2999.04px;font-size:36px;line-height:43.2px;color:#15181c;transform:scaleX(1.141);transform-origin:0 0;-webkit-text-stroke:0.72px #15181c;">2≤3µm / 0&gt;3µm</span>
<span class="t" style="left:3451.2px;top:2999.04px;font-size:36px;line-height:43.2px;color:#15181c;transform:scaleX(1.136);transform-origin:0 0;-webkit-text-stroke:0.72px #15181c;">0≤2µm / 0 from 2-5µm / 1&gt;5µm</span>
<span class="t" style="left:4040px;top:2999.04px;font-size:36px;line-height:43.2px;color:#15181c;transform:scaleX(0.93);transform-origin:0 0;-webkit-text-stroke:0.72px #15181c;">0</span>
<span class="t" style="left:4467.2px;top:2999.04px;font-size:36px;line-height:43.2px;color:#15181c;transform:scaleX(0.93);transform-origin:0 0;-webkit-text-stroke:0.72px #15181c;">3</span>
<span class="t" style="left:4860.8px;top:2999.04px;font-size:36px;line-height:43.2px;color:#15181c;transform:scaleX(0.93);transform-origin:0 0;-webkit-text-stroke:0.72px #15181c;">0</span>
<div style="left:400px;top:3050.16px;width:4752px;height:66.16px;background:#f3f6f6"></div>
<div style="left:400px;top:3113.12px;width:4752px;height:3.2px;background:#e6ebec"></div>
<span class="t" style="left:414.4px;top:3065.2px;font-size:36px;line-height:43.2px;color:#15181c;transform:scaleX(0.93);transform-origin:0 0;-webkit-text-stroke:0.72px #15181c;">2</span>
<span class="t" style="left:480px;top:3065.2px;font-size:36px;line-height:43.2px;color:#15181c;transform:scaleX(1.032);transform-origin:0 0;-webkit-text-stroke:0.72px #15181c;">20/01/2012 14:59:25</span>
<span class="t" style="left:848px;top:3065.2px;font-size:36px;line-height:43.2px;color:#15181c;transform:scaleX(1.062);transform-origin:0 0;-webkit-text-stroke:0.72px #15181c;">IEC-PC-Singlemode-RL26dB.rule</span>
<span class="t" style="left:1443.2px;top:3065.2px;font-size:36px;line-height:43.2px;color:#15181c;transform:scaleX(1.057);transform-origin:0 0;-webkit-text-stroke:0.72px #15181c;">sampleName0022</span>
<div style="left:1804px;top:3050.16px;width:229.6px;height:62.96px;background:#fd2410"></div>
<span class="t" style="left:1811.2px;top:3065.2px;font-size:36px;line-height:43.2px;color:#5a0c04;transform:scaleX(0.972);transform-origin:0 0;-webkit-text-stroke:0.72px #5a0c04;">FAIL</span>
<span class="t" style="left:2044.8px;top:3065.2px;font-size:36px;line-height:43.2px;color:#15181c;transform:scaleX(1.135);transform-origin:0 0;-webkit-text-stroke:0.72px #15181c;">0≤3µm / 0&gt;3µm</span>
<span class="t" style="left:2470.4px;top:3065.2px;font-size:36px;line-height:43.2px;color:#15181c;transform:scaleX(1.135);transform-origin:0 0;-webkit-text-stroke:0.72px #15181c;">0≤3µm / 0&gt;3µm</span>
<span class="t" style="left:2860.8px;top:3065.2px;font-size:36px;line-height:43.2px;color:#15181c;transform:scaleX(1.141);transform-origin:0 0;-webkit-text-stroke:0.72px #15181c;">2≤3µm / 0&gt;3µm</span>
<span class="t" style="left:3451.2px;top:3065.2px;font-size:36px;line-height:43.2px;color:#15181c;transform:scaleX(1.136);transform-origin:0 0;-webkit-text-stroke:0.72px #15181c;">0≤2µm / 0 from 2-5µm / 1&gt;5µm</span>
<span class="t" style="left:4040px;top:3065.2px;font-size:36px;line-height:43.2px;color:#15181c;transform:scaleX(0.93);transform-origin:0 0;-webkit-text-stroke:0.72px #15181c;">0</span>
<span class="t" style="left:4467.2px;top:3065.2px;font-size:36px;line-height:43.2px;color:#15181c;transform:scaleX(0.93);transform-origin:0 0;-webkit-text-stroke:0.72px #15181c;">1</span>
<span class="t" style="left:4860.8px;top:3065.2px;font-size:36px;line-height:43.2px;color:#15181c;transform:scaleX(0.93);transform-origin:0 0;-webkit-text-stroke:0.72px #15181c;">0</span>
<div style="left:400px;top:3179.28px;width:4752px;height:3.2px;background:#e6ebec"></div>
<span class="t" style="left:414.4px;top:3131.44px;font-size:36px;line-height:43.2px;color:#15181c;transform:scaleX(0.93);transform-origin:0 0;-webkit-text-stroke:0.72px #15181c;">3</span>
<span class="t" style="left:480px;top:3131.44px;font-size:36px;line-height:43.2px;color:#15181c;transform:scaleX(1.032);transform-origin:0 0;-webkit-text-stroke:0.72px #15181c;">20/01/2012 14:59:02</span>
<span class="t" style="left:848px;top:3131.44px;font-size:36px;line-height:43.2px;color:#15181c;transform:scaleX(1.062);transform-origin:0 0;-webkit-text-stroke:0.72px #15181c;">IEC-PC-Singlemode-RL26dB.rule</span>
<span class="t" style="left:1443.2px;top:3131.44px;font-size:36px;line-height:43.2px;color:#15181c;transform:scaleX(1.057);transform-origin:0 0;-webkit-text-stroke:0.72px #15181c;">sampleName0021</span>
<div style="left:1804px;top:3116.32px;width:229.6px;height:62.96px;background:#fd2410"></div>
<span class="t" style="left:1811.2px;top:3131.44px;font-size:36px;line-height:43.2px;color:#5a0c04;transform:scaleX(0.972);transform-origin:0 0;-webkit-text-stroke:0.72px #5a0c04;">FAIL</span>
<span class="t" style="left:2044.8px;top:3131.44px;font-size:36px;line-height:43.2px;color:#15181c;transform:scaleX(1.135);transform-origin:0 0;-webkit-text-stroke:0.72px #15181c;">1≤3µm / 0&gt;3µm</span>
<span class="t" style="left:2470.4px;top:3131.44px;font-size:36px;line-height:43.2px;color:#15181c;transform:scaleX(1.135);transform-origin:0 0;-webkit-text-stroke:0.72px #15181c;">0≤3µm / 0&gt;3µm</span>
<span class="t" style="left:2860.8px;top:3131.44px;font-size:36px;line-height:43.2px;color:#15181c;transform:scaleX(1.141);transform-origin:0 0;-webkit-text-stroke:0.72px #15181c;">1≤3µm / 0&gt;3µm</span>
<span class="t" style="left:3451.2px;top:3131.44px;font-size:36px;line-height:43.2px;color:#15181c;transform:scaleX(1.136);transform-origin:0 0;-webkit-text-stroke:0.72px #15181c;">0≤2µm / 0 from 2-5µm / 1&gt;5µm</span>
<span class="t" style="left:4040px;top:3131.44px;font-size:36px;line-height:43.2px;color:#15181c;transform:scaleX(0.93);transform-origin:0 0;-webkit-text-stroke:0.72px #15181c;">0</span>
<span class="t" style="left:4467.2px;top:3131.44px;font-size:36px;line-height:43.2px;color:#15181c;transform:scaleX(0.93);transform-origin:0 0;-webkit-text-stroke:0.72px #15181c;">0</span>
<span class="t" style="left:4860.8px;top:3131.44px;font-size:36px;line-height:43.2px;color:#15181c;transform:scaleX(0.93);transform-origin:0 0;-webkit-text-stroke:0.72px #15181c;">0</span>
<div style="left:400px;top:3182.48px;width:4752px;height:66.16px;background:#f3f6f6"></div>
<div style="left:400px;top:3245.44px;width:4752px;height:3.2px;background:#e6ebec"></div>
<span class="t" style="left:414.4px;top:3197.52px;font-size:36px;line-height:43.2px;color:#15181c;transform:scaleX(0.93);transform-origin:0 0;-webkit-text-stroke:0.72px #15181c;">4</span>
<span class="t" style="left:480px;top:3197.52px;font-size:36px;line-height:43.2px;color:#15181c;transform:scaleX(1.032);transform-origin:0 0;-webkit-text-stroke:0.72px #15181c;">20/01/2012 14:58:50</span>
<span class="t" style="left:848px;top:3197.52px;font-size:36px;line-height:43.2px;color:#15181c;transform:scaleX(1.062);transform-origin:0 0;-webkit-text-stroke:0.72px #15181c;">IEC-PC-Singlemode-RL26dB.rule</span>
<span class="t" style="left:1443.2px;top:3197.52px;font-size:36px;line-height:43.2px;color:#15181c;transform:scaleX(1.057);transform-origin:0 0;-webkit-text-stroke:0.72px #15181c;">sampleName0020</span>
<div style="left:1804px;top:3182.48px;width:229.6px;height:62.96px;background:#fd2410"></div>
<span class="t" style="left:1811.2px;top:3197.52px;font-size:36px;line-height:43.2px;color:#5a0c04;transform:scaleX(0.972);transform-origin:0 0;-webkit-text-stroke:0.72px #5a0c04;">FAIL</span>
<span class="t" style="left:2044.8px;top:3197.52px;font-size:36px;line-height:43.2px;color:#15181c;transform:scaleX(1.135);transform-origin:0 0;-webkit-text-stroke:0.72px #15181c;">1≤3µm / 0&gt;3µm</span>
<span class="t" style="left:2470.4px;top:3197.52px;font-size:36px;line-height:43.2px;color:#15181c;transform:scaleX(1.135);transform-origin:0 0;-webkit-text-stroke:0.72px #15181c;">0≤3µm / 0&gt;3µm</span>
<span class="t" style="left:2860.8px;top:3197.52px;font-size:36px;line-height:43.2px;color:#15181c;transform:scaleX(1.141);transform-origin:0 0;-webkit-text-stroke:0.72px #15181c;">2≤3µm / 0&gt;3µm</span>
<span class="t" style="left:3451.2px;top:3197.52px;font-size:36px;line-height:43.2px;color:#15181c;transform:scaleX(1.136);transform-origin:0 0;-webkit-text-stroke:0.72px #15181c;">0≤2µm / 0 from 2-5µm / 1&gt;5µm</span>
<span class="t" style="left:4040px;top:3197.52px;font-size:36px;line-height:43.2px;color:#15181c;transform:scaleX(0.93);transform-origin:0 0;-webkit-text-stroke:0.72px #15181c;">0</span>
<span class="t" style="left:4467.2px;top:3197.52px;font-size:36px;line-height:43.2px;color:#15181c;transform:scaleX(0.93);transform-origin:0 0;-webkit-text-stroke:0.72px #15181c;">0</span>
<span class="t" style="left:4860.8px;top:3197.52px;font-size:36px;line-height:43.2px;color:#15181c;transform:scaleX(0.93);transform-origin:0 0;-webkit-text-stroke:0.72px #15181c;">0</span>
<div style="left:400px;top:3311.6px;width:4752px;height:3.2px;background:#e6ebec"></div>
<span class="t" style="left:414.4px;top:3263.68px;font-size:36px;line-height:43.2px;color:#15181c;transform:scaleX(0.93);transform-origin:0 0;-webkit-text-stroke:0.72px #15181c;">5</span>
<span class="t" style="left:480px;top:3263.68px;font-size:36px;line-height:43.2px;color:#15181c;transform:scaleX(1.032);transform-origin:0 0;-webkit-text-stroke:0.72px #15181c;">20/01/2012 14:58:48</span>
<span class="t" style="left:848px;top:3263.68px;font-size:36px;line-height:43.2px;color:#15181c;transform:scaleX(1.062);transform-origin:0 0;-webkit-text-stroke:0.72px #15181c;">IEC-PC-Singlemode-RL26dB.rule</span>
<span class="t" style="left:1443.2px;top:3263.68px;font-size:36px;line-height:43.2px;color:#15181c;transform:scaleX(1.057);transform-origin:0 0;-webkit-text-stroke:0.72px #15181c;">sampleName0019</span>
<div style="left:1804px;top:3248.64px;width:229.6px;height:62.96px;background:#94a8b5"></div>
<span class="t" style="left:1811.2px;top:3263.68px;font-size:36px;line-height:43.2px;color:#1f2830;transform:scaleX(1.066);transform-origin:0 0;-webkit-text-stroke:0.72px #1f2830;">N/A</span>
<span class="t" style="left:2048px;top:3263.68px;font-size:36px;line-height:43.2px;color:#15181c;transform:scaleX(0.93);transform-origin:0 0;-webkit-text-stroke:0.72px #15181c;">-</span>
<span class="t" style="left:2472px;top:3263.68px;font-size:36px;line-height:43.2px;color:#15181c;transform:scaleX(0.93);transform-origin:0 0;-webkit-text-stroke:0.72px #15181c;">-</span>
<span class="t" style="left:2864px;top:3263.68px;font-size:36px;line-height:43.2px;color:#15181c;transform:scaleX(0.93);transform-origin:0 0;-webkit-text-stroke:0.72px #15181c;">-</span>
<span class="t" style="left:3456px;top:3263.68px;font-size:36px;line-height:43.2px;color:#15181c;transform:scaleX(0.93);transform-origin:0 0;-webkit-text-stroke:0.72px #15181c;">-</span>
<span class="t" style="left:4040px;top:3263.68px;font-size:36px;line-height:43.2px;color:#15181c;transform:scaleX(0.93);transform-origin:0 0;-webkit-text-stroke:0.72px #15181c;">-</span>
<span class="t" style="left:4467.2px;top:3263.68px;font-size:36px;line-height:43.2px;color:#15181c;transform:scaleX(0.93);transform-origin:0 0;-webkit-text-stroke:0.72px #15181c;">-</span>
<span class="t" style="left:4860.8px;top:3263.68px;font-size:36px;line-height:43.2px;color:#15181c;transform:scaleX(0.93);transform-origin:0 0;-webkit-text-stroke:0.72px #15181c;">-</span>
<div style="left:400px;top:3314.8px;width:4752px;height:66.16px;background:#f3f6f6"></div>
<div style="left:400px;top:3377.76px;width:4752px;height:3.2px;background:#e6ebec"></div>
<span class="t" style="left:414.4px;top:3329.92px;font-size:36px;line-height:43.2px;color:#15181c;transform:scaleX(0.93);transform-origin:0 0;-webkit-text-stroke:0.72px #15181c;">6</span>
<span class="t" style="left:480px;top:3329.92px;font-size:36px;line-height:43.2px;color:#15181c;transform:scaleX(1.032);transform-origin:0 0;-webkit-text-stroke:0.72px #15181c;">20/01/2012 14:57:45</span>
<span class="t" style="left:848px;top:3329.92px;font-size:36px;line-height:43.2px;color:#15181c;transform:scaleX(1.062);transform-origin:0 0;-webkit-text-stroke:0.72px #15181c;">IEC-PC-Singlemode-RL26dB.rule</span>
<span class="t" style="left:1443.2px;top:3329.92px;font-size:36px;line-height:43.2px;color:#15181c;transform:scaleX(1.057);transform-origin:0 0;-webkit-text-stroke:0.72px #15181c;">sampleName0018</span>
<div style="left:1804px;top:3314.8px;width:229.6px;height:62.96px;background:#fd2410"></div>
<span class="t" style="left:1811.2px;top:3329.92px;font-size:36px;line-height:43.2px;color:#5a0c04;transform:scaleX(0.972);transform-origin:0 0;-webkit-text-stroke:0.72px #5a0c04;">FAIL</span>
<span class="t" style="left:2044.8px;top:3329.92px;font-size:36px;line-height:43.2px;color:#15181c;transform:scaleX(1.135);transform-origin:0 0;-webkit-text-stroke:0.72px #15181c;">1≤3µm / 0&gt;3µm</span>
<span class="t" style="left:2470.4px;top:3329.92px;font-size:36px;line-height:43.2px;color:#15181c;transform:scaleX(1.135);transform-origin:0 0;-webkit-text-stroke:0.72px #15181c;">0≤3µm / 0&gt;3µm</span>
<span class="t" style="left:2860.8px;top:3329.92px;font-size:36px;line-height:43.2px;color:#15181c;transform:scaleX(1.141);transform-origin:0 0;-webkit-text-stroke:0.72px #15181c;">2≤3µm / 0&gt;3µm</span>
<span class="t" style="left:3451.2px;top:3329.92px;font-size:36px;line-height:43.2px;color:#15181c;transform:scaleX(1.136);transform-origin:0 0;-webkit-text-stroke:0.72px #15181c;">0≤2µm / 0 from 2-5µm / 1&gt;5µm</span>
<span class="t" style="left:4040px;top:3329.92px;font-size:36px;line-height:43.2px;color:#15181c;transform:scaleX(0.93);transform-origin:0 0;-webkit-text-stroke:0.72px #15181c;">0</span>
<span class="t" style="left:4467.2px;top:3329.92px;font-size:36px;line-height:43.2px;color:#15181c;transform:scaleX(0.93);transform-origin:0 0;-webkit-text-stroke:0.72px #15181c;">0</span>
<span class="t" style="left:4860.8px;top:3329.92px;font-size:36px;line-height:43.2px;color:#15181c;transform:scaleX(0.93);transform-origin:0 0;-webkit-text-stroke:0.72px #15181c;">0</span>
<div style="left:400px;top:3443.92px;width:4752px;height:3.2px;background:#e6ebec"></div>
<span class="t" style="left:414.4px;top:3396px;font-size:36px;line-height:43.2px;color:#15181c;transform:scaleX(0.93);transform-origin:0 0;-webkit-text-stroke:0.72px #15181c;">7</span>
<span class="t" style="left:480px;top:3396px;font-size:36px;line-height:43.2px;color:#15181c;transform:scaleX(1.032);transform-origin:0 0;-webkit-text-stroke:0.72px #15181c;">20/01/2012 14:57:40</span>
<span class="t" style="left:848px;top:3396px;font-size:36px;line-height:43.2px;color:#15181c;transform:scaleX(1.062);transform-origin:0 0;-webkit-text-stroke:0.72px #15181c;">IEC-PC-Singlemode-RL26dB.rule</span>
<span class="t" style="left:1443.2px;top:3396px;font-size:36px;line-height:43.2px;color:#15181c;transform:scaleX(1.057);transform-origin:0 0;-webkit-text-stroke:0.72px #15181c;">sampleName0017</span>
<div style="left:1804px;top:3380.96px;width:229.6px;height:62.96px;background:#94a8b5"></div>
<span class="t" style="left:1811.2px;top:3396px;font-size:36px;line-height:43.2px;color:#1f2830;transform:scaleX(1.066);transform-origin:0 0;-webkit-text-stroke:0.72px #1f2830;">N/A</span>
<span class="t" style="left:2048px;top:3396px;font-size:36px;line-height:43.2px;color:#15181c;transform:scaleX(0.93);transform-origin:0 0;-webkit-text-stroke:0.72px #15181c;">-</span>
<span class="t" style="left:2472px;top:3396px;font-size:36px;line-height:43.2px;color:#15181c;transform:scaleX(0.93);transform-origin:0 0;-webkit-text-stroke:0.72px #15181c;">-</span>
<span class="t" style="left:2864px;top:3396px;font-size:36px;line-height:43.2px;color:#15181c;transform:scaleX(0.93);transform-origin:0 0;-webkit-text-stroke:0.72px #15181c;">-</span>
<span class="t" style="left:3456px;top:3396px;font-size:36px;line-height:43.2px;color:#15181c;transform:scaleX(0.93);transform-origin:0 0;-webkit-text-stroke:0.72px #15181c;">-</span>
<span class="t" style="left:4040px;top:3396px;font-size:36px;line-height:43.2px;color:#15181c;transform:scaleX(0.93);transform-origin:0 0;-webkit-text-stroke:0.72px #15181c;">-</span>
<span class="t" style="left:4467.2px;top:3396px;font-size:36px;line-height:43.2px;color:#15181c;transform:scaleX(0.93);transform-origin:0 0;-webkit-text-stroke:0.72px #15181c;">-</span>
<span class="t" style="left:4860.8px;top:3396px;font-size:36px;line-height:43.2px;color:#15181c;transform:scaleX(0.93);transform-origin:0 0;-webkit-text-stroke:0.72px #15181c;">-</span>
</div>
<div style="left:462.4px;top:2908.8px;width:3.2px;height:528px;background:#e3e8ea"></div>
<div style="left:832.8px;top:2908.8px;width:3.2px;height:528px;background:#e3e8ea"></div>
<div style="left:1426.4px;top:2908.8px;width:3.2px;height:528px;background:#e3e8ea"></div>
<div style="left:1800.8px;top:2908.8px;width:3.2px;height:528px;background:#e3e8ea"></div>
<div style="left:2032.8px;top:2908.8px;width:3.2px;height:528px;background:#e3e8ea"></div>
<div style="left:2454.4px;top:2908.8px;width:3.2px;height:528px;background:#e3e8ea"></div>
<div style="left:2852.8px;top:2908.8px;width:3.2px;height:528px;background:#e3e8ea"></div>
<div style="left:3442.4px;top:2908.8px;width:3.2px;height:528px;background:#e3e8ea"></div>
<div style="left:4028.8px;top:2908.8px;width:3.2px;height:528px;background:#e3e8ea"></div>
<div style="left:4454.4px;top:2908.8px;width:3.2px;height:528px;background:#e3e8ea"></div>
<div style="left:4842.4px;top:2908.8px;width:3.2px;height:528px;background:#e3e8ea"></div>
<span class="t" style="left:613.84px;top:2924.8px;font-size:36px;line-height:43.2px;color:#15181c;transform:scaleX(0.93);transform-origin:0 0;-webkit-text-stroke:0.72px #15181c;">Date</span>
<span class="t" style="left:1083.76px;top:2924.8px;font-size:36px;line-height:43.2px;color:#15181c;transform:scaleX(0.93);transform-origin:0 0;-webkit-text-stroke:0.72px #15181c;">Profile</span>
<span class="t" style="left:1509.12px;top:2924.8px;font-size:36px;line-height:43.2px;color:#15181c;transform:scaleX(0.93);transform-origin:0 0;-webkit-text-stroke:0.72px #15181c;">Sample Name</span>
<span class="t" style="left:1870.96px;top:2924.8px;font-size:36px;line-height:43.2px;color:#15181c;transform:scaleX(0.93);transform-origin:0 0;-webkit-text-stroke:0.72px #15181c;">Result</span>
<span class="t" style="left:2116.8px;top:2924.8px;font-size:36px;line-height:43.2px;color:#15181c;transform:scaleX(0.93);transform-origin:0 0;-webkit-text-stroke:0.72px #15181c;">Zone 1 scratches</span>
<span class="t" style="left:2544.48px;top:2924.8px;font-size:36px;line-height:43.2px;color:#15181c;transform:scaleX(0.93);transform-origin:0 0;-webkit-text-stroke:0.72px #15181c;">Zone 1 defects</span>
<span class="t" style="left:3020.8px;top:2924.8px;font-size:36px;line-height:43.2px;color:#15181c;transform:scaleX(0.93);transform-origin:0 0;-webkit-text-stroke:0.72px #15181c;">Zone 2 scratches</span>
<span class="t" style="left:3626.48px;top:2924.8px;font-size:36px;line-height:43.2px;color:#15181c;transform:scaleX(0.93);transform-origin:0 0;-webkit-text-stroke:0.72px #15181c;">Zone 2 defects</span>
<span class="t" style="left:4114.8px;top:2924.8px;font-size:36px;line-height:43.2px;color:#15181c;transform:scaleX(0.93);transform-origin:0 0;-webkit-text-stroke:0.72px #15181c;">Zone 3 scratches</span>
<span class="t" style="left:4539.28px;top:2924.8px;font-size:36px;line-height:43.2px;color:#15181c;transform:scaleX(0.93);transform-origin:0 0;-webkit-text-stroke:0.72px #15181c;">Zone 3 defects</span>
<span class="t" style="left:4908.8px;top:2924.8px;font-size:36px;line-height:43.2px;color:#15181c;transform:scaleX(1.093);transform-origin:0 0;-webkit-text-stroke:0.72px #15181c;">Zone 4 scratc</span>
<div style="left:5152px;top:2908.8px;width:52.8px;height:528px;background:linear-gradient(90deg,#e4e9e9,#f4f7f7 30%,#f6f8f8);"></div>
<svg style="left:5166.4px;top:2931.2px" width="24" height="16" viewBox="0 0 10 6"><path d="M0 6H10L5 0Z" fill="#3c4446"/></svg>
<svg style="left:5166.4px;top:3393.6px" width="24" height="16" viewBox="0 0 10 6"><path d="M0 0H10L5 6Z" fill="#3c4446"/></svg>
<div style="left:5155.2px;top:2968px;width:46.4px;height:240px;background:linear-gradient(90deg,#f9fbfb,#e9eded 50%,#dde2e2);border:4px solid #a3acad;border-radius:9.6px;box-sizing:border-box;"></div>
<div style="left:5168px;top:3078px;width:20.8px;height:4px;background:#7d8789"></div>
<div style="left:5168px;top:3086px;width:20.8px;height:4px;background:#7d8789"></div>
<div style="left:5168px;top:3094px;width:20.8px;height:4px;background:#7d8789"></div>
<div style="left:400px;top:3436.8px;width:4752px;height:43.2px;background:linear-gradient(180deg,#e4e9e9,#f2f5f6 35%,#f4f7f8);border-bottom:4px solid #c4cccd;border-left:4px solid #c9d1d2;box-sizing:border-box;"></div>
<div style="left:456px;top:3439.2px;width:3324px;height:36.8px;background:linear-gradient(180deg,#f4f7f7,#e0e6e6 50%,#c8d0d1);border:4px solid #98a2a4;border-radius:9.6px;box-sizing:border-box;"></div>
<div style="left:2108px;top:3450.4px;width:4px;height:16px;background:#7d8789"></div>
<div style="left:2116px;top:3450.4px;width:4px;height:16px;background:#7d8789"></div>
<div style="left:2124px;top:3450.4px;width:4px;height:16px;background:#7d8789"></div>
<svg style="left:420.8px;top:3446.4px" width="16" height="24" viewBox="0 0 6 10"><path d="M6 0V10L0 5Z" fill="#3c4446"/></svg>
<svg style="left:5115.2px;top:3446.4px" width="16" height="24" viewBox="0 0 6 10"><path d="M0 0V10L6 5Z" fill="#3c4446"/></svg>
<div style="left:5152px;top:3436.8px;width:52.8px;height:43.2px;background:#eef3f3"></div>
<div style="left:144px;top:3480px;width:5060.8px;height:16px;background:#eef3f3"></div>
<div style="left:5220.8px;top:2840.8px;width:923.2px;height:58.4px;background:linear-gradient(180deg,#e3e9ea,#d9e0e2);"></div>
<svg style="left:5232px;top:2848px" width="44.8" height="46.4" viewBox="0 0 11 12"><circle cx="5" cy="6.6" r="4.6" fill="#23272e"/><circle cx="5" cy="6.6" r="2.2" fill="#4a5058"/><circle cx="8.8" cy="1.8" r="1.6" fill="#e0281e"/></svg>
<span class="t" style="left:5278.4px;top:2849.92px;font-size:36.8px;line-height:44.16px;color:#15181c;transform:scaleX(0.955);transform-origin:0 0;-webkit-text-stroke:0.72px #15181c;">Camera settings</span>
<svg style="left:5942.4px;top:2851.2px" width="200" height="38.4" viewBox="0 0 50 9.6"><path d="M.4 1H5.4M1.4 1V5.2M4.4 1V5.2M0 5.4H5.8M2.9 5.4V9" stroke="#15181c" stroke-width="1.3" fill="none"/><path d="M11.6 4.8H15M15 1.8V7.8M15 3H21.6V6.6H15" stroke="#15181c" stroke-width="1.3" fill="none"/><rect x="16" y="4.6" width="5.6" height="2" fill="#15181c"/><rect x="28" y="1" width="5.4" height="5" fill="none" stroke="#15181c" stroke-width="1.4"/><rect x="26" y="3.4" width="5.4" height="5" fill="#15181c" stroke="#15181c" stroke-width="1.2"/><path d="M40 1.6L46 8M46 1.6L40 8" stroke="#15181c" stroke-width="1.8"/></svg>
<div style="left:5225.6px;top:2899.2px;width:918.4px;height:528px;background:#eef3f3"></div>
<span class="t" style="left:5294.4px;top:2918.72px;font-size:36.8px;line-height:44.16px;color:#14181e;transform:scaleX(0.952);transform-origin:0 0;-webkit-text-stroke:0.72px #14181e;">Exposure [ms]</span>
<span class="t" style="left:5294.4px;top:2987.52px;font-size:36.8px;line-height:44.16px;color:#14181e;transform:scaleX(0.955);transform-origin:0 0;-webkit-text-stroke:0.72px #14181e;">Fiber exposure [ms]</span>
<span class="t" style="left:5294.4px;top:3054.72px;font-size:36.8px;line-height:44.16px;color:#14181e;transform:scaleX(0.976);transform-origin:0 0;-webkit-text-stroke:0.72px #14181e;">Average frames</span>
<span class="t" style="left:5789.6px;top:2918.72px;font-size:36.8px;line-height:44.16px;color:#14181e;transform:scaleX(0.885);transform-origin:0 0;-webkit-text-stroke:0.72px #14181e;">Gain</span>
<span class="t" style="left:5789.6px;top:3056.32px;font-size:36.8px;line-height:44.16px;color:#14181e;transform:scaleX(0.886);transform-origin:0 0;-webkit-text-stroke:0.72px #14181e;">Gamma</span>
<div style="left:5639.2px;top:2912px;width:79.2px;height:54.4px;background:#ffffff;"></div>
<div style="left:5724px;top:2914.4px;width:37.6px;height:49.6px;background:#f3f7f8;border:3.2px solid #c9d5da;border-radius:4.8px;box-sizing:border-box;"></div>
<span class="t" style="left:5646.4px;top:2917.92px;font-size:36.8px;line-height:44.16px;color:#14181e;transform:scaleX(0.938);transform-origin:0 0;-webkit-text-stroke:0.72px #14181e;">33</span>
<svg style="left:5734px;top:2921.6px" width="17.6" height="11.2" viewBox="0 0 10 6"><path d="M0 6H10L5 0Z" fill="#4a7ae0"/></svg>
<svg style="left:5734px;top:2945.6px" width="17.6" height="11.2" viewBox="0 0 10 6"><path d="M0 0H10L5 6Z" fill="#4a7ae0"/></svg>
<div style="left:5639.2px;top:2982.4px;width:79.2px;height:54.4px;background:#ffffff;"></div>
<div style="left:5724px;top:2984.8px;width:37.6px;height:49.6px;background:#f3f7f8;border:3.2px solid #c9d5da;border-radius:4.8px;box-sizing:border-box;"></div>
<span class="t" style="left:5646.4px;top:2988.32px;font-size:36.8px;line-height:44.16px;color:#14181e;transform:scaleX(0.938);transform-origin:0 0;-webkit-text-stroke:0.72px #14181e;">8</span>
<svg style="left:5734px;top:2992px" width="17.6" height="11.2" viewBox="0 0 10 6"><path d="M0 6H10L5 0Z" fill="#4a7ae0"/></svg>
<svg style="left:5734px;top:3016px" width="17.6" height="11.2" viewBox="0 0 10 6"><path d="M0 0H10L5 6Z" fill="#4a7ae0"/></svg>
<div style="left:5639.2px;top:3051.2px;width:79.2px;height:52px;background:#ffffff;"></div>
<div style="left:5724px;top:3053.6px;width:37.6px;height:47.2px;background:#f3f7f8;border:3.2px solid #c9d5da;border-radius:4.8px;box-sizing:border-box;"></div>
<span class="t" style="left:5646.4px;top:3055.92px;font-size:36.8px;line-height:44.16px;color:#14181e;transform:scaleX(0.86);transform-origin:0 0;-webkit-text-stroke:0.72px #14181e;">1</span>
<svg style="left:5734px;top:3059.6px" width="17.6" height="11.2" viewBox="0 0 10 6"><path d="M0 6H10L5 0Z" fill="#4a7ae0"/></svg>
<svg style="left:5734px;top:3083.6px" width="17.6" height="11.2" viewBox="0 0 10 6"><path d="M0 0H10L5 6Z" fill="#4a7ae0"/></svg>
<div style="left:5932.8px;top:2912px;width:85.6px;height:54.4px;background:#ffffff;"></div>
<div style="left:6024px;top:2914.4px;width:37.6px;height:49.6px;background:#f3f7f8;border:3.2px solid #c9d5da;border-radius:4.8px;box-sizing:border-box;"></div>
<span class="t" style="left:5944.8px;top:2917.92px;font-size:36.8px;line-height:44.16px;color:#14181e;transform:scaleX(0.876);transform-origin:0 0;-webkit-text-stroke:0.72px #14181e;">1.0</span>
<svg style="left:6034px;top:2921.6px" width="17.6" height="11.2" viewBox="0 0 10 6"><path d="M0 6H10L5 0Z" fill="#4a7ae0"/></svg>
<svg style="left:6034px;top:2945.6px" width="17.6" height="11.2" viewBox="0 0 10 6"><path d="M0 0H10L5 6Z" fill="#4a7ae0"/></svg>
<div style="left:5932.8px;top:3051.2px;width:85.6px;height:52px;background:#ffffff;"></div>
<div style="left:6024px;top:3053.6px;width:37.6px;height:47.2px;background:#f3f7f8;border:3.2px solid #c9d5da;border-radius:4.8px;box-sizing:border-box;"></div>
<span class="t" style="left:5944.8px;top:3055.92px;font-size:36.8px;line-height:44.16px;color:#14181e;transform:scaleX(0.876);transform-origin:0 0;-webkit-text-stroke:0.72px #14181e;">1.0</span>
<svg style="left:6034px;top:3059.6px" width="17.6" height="11.2" viewBox="0 0 10 6"><path d="M0 6H10L5 0Z" fill="#4a7ae0"/></svg>
<svg style="left:6034px;top:3083.6px" width="17.6" height="11.2" viewBox="0 0 10 6"><path d="M0 0H10L5 6Z" fill="#4a7ae0"/></svg>
<span class="t" style="left:5294.4px;top:3113.6px;font-size:36px;line-height:43.2px;color:#98a5b4;-webkit-text-stroke:0.72px #98a5b4;font-style:italic;">Detection is optimal when Gain = Gamma = 1.0</span>
<div style="left:5293.6px;top:3160px;width:780px;height:77.6px;background:linear-gradient(180deg,#a6e4f3,#b2eaf6 50%,#9cdff1);border:4.8px solid #35aee0;border-radius:6.4px;box-sizing:border-box;"></div>
<div style="left:5680px;top:3160px;width:4.8px;height:77.6px;background:#2a86b4"></div>
<span class="t" style="left:5304px;top:3182px;font-size:36px;line-height:43.2px;color:#3d86a8;transform:scaleX(0.881);transform-origin:0 0;-webkit-text-stroke:0.72px #3d86a8;">Black</span>
<span class="t" style="left:5968px;top:3182px;font-size:36px;line-height:43.2px;color:#3d86a8;transform:scaleX(0.956);transform-origin:0 0;-webkit-text-stroke:0.72px #3d86a8;">White</span>
<span class="t" style="left:5554.4px;top:3182px;font-size:36px;line-height:43.2px;color:#3d86a8;transform:scaleX(1.016);transform-origin:0 0;-webkit-text-stroke:0.72px #3d86a8;">Ferrule contrast</span>
<div style="left:5293.6px;top:3240px;width:780px;height:77.6px;background:linear-gradient(180deg,#a6e4f3,#b2eaf6 50%,#9cdff1);border:4.8px solid #35aee0;border-radius:6.4px;box-sizing:border-box;"></div>
<div style="left:5680px;top:3240px;width:4.8px;height:77.6px;background:#2a86b4"></div>
<span class="t" style="left:5304px;top:3262px;font-size:36px;line-height:43.2px;color:#3d86a8;transform:scaleX(0.881);transform-origin:0 0;-webkit-text-stroke:0.72px #3d86a8;">Black</span>
<span class="t" style="left:5968px;top:3262px;font-size:36px;line-height:43.2px;color:#3d86a8;transform:scaleX(0.956);transform-origin:0 0;-webkit-text-stroke:0.72px #3d86a8;">White</span>
<span class="t" style="left:5572.8px;top:3262px;font-size:36px;line-height:43.2px;color:#3d86a8;-webkit-text-stroke:0.72px #3d86a8;">Fiber contrast</span>
<div style="left:5225.6px;top:3426.4px;width:918.4px;height:69.6px;background:#eef3f3"></div>
<div style="left:5225.6px;top:3423.2px;width:546.4px;height:4px;background:#c3cbcd"></div>
<div style="left:5228px;top:3426.4px;width:301.6px;height:56px;background:linear-gradient(180deg,#f3f6f6,#e4e9ea);border:4px solid #9aa4a6;border-top:0;box-sizing:border-box;"></div>
<div style="left:5529.6px;top:3426.4px;width:242.4px;height:56px;background:linear-gradient(180deg,#f3f6f6,#e4e9ea);border:4px solid #9aa4a6;border-top:0;box-sizing:border-box;border-left:0;"></div>
<div style="left:5772px;top:3422.4px;width:339.2px;height:78.4px;background:#ffffff;border:4px solid #c3cacc;border-top:0;box-sizing:border-box;"></div>
<span class="t" style="left:5256px;top:3434.72px;font-size:36.8px;line-height:44.16px;color:#15181c;transform:scaleX(0.953);transform-origin:0 0;-webkit-text-stroke:0.72px #15181c;">Panda settings</span>
<span class="t" style="left:5568.8px;top:3434.72px;font-size:36.8px;line-height:44.16px;color:#15181c;transform:scaleX(0.959);transform-origin:0 0;-webkit-text-stroke:0.72px #15181c;">Histogram</span>
<span class="t" style="left:5808px;top:3434.72px;font-size:36.8px;line-height:44.16px;color:#15181c;transform:scaleX(0.97);transform-origin:0 0;-webkit-text-stroke:0.72px #15181c;">Camera settings</span>
</div></div></body></html>
